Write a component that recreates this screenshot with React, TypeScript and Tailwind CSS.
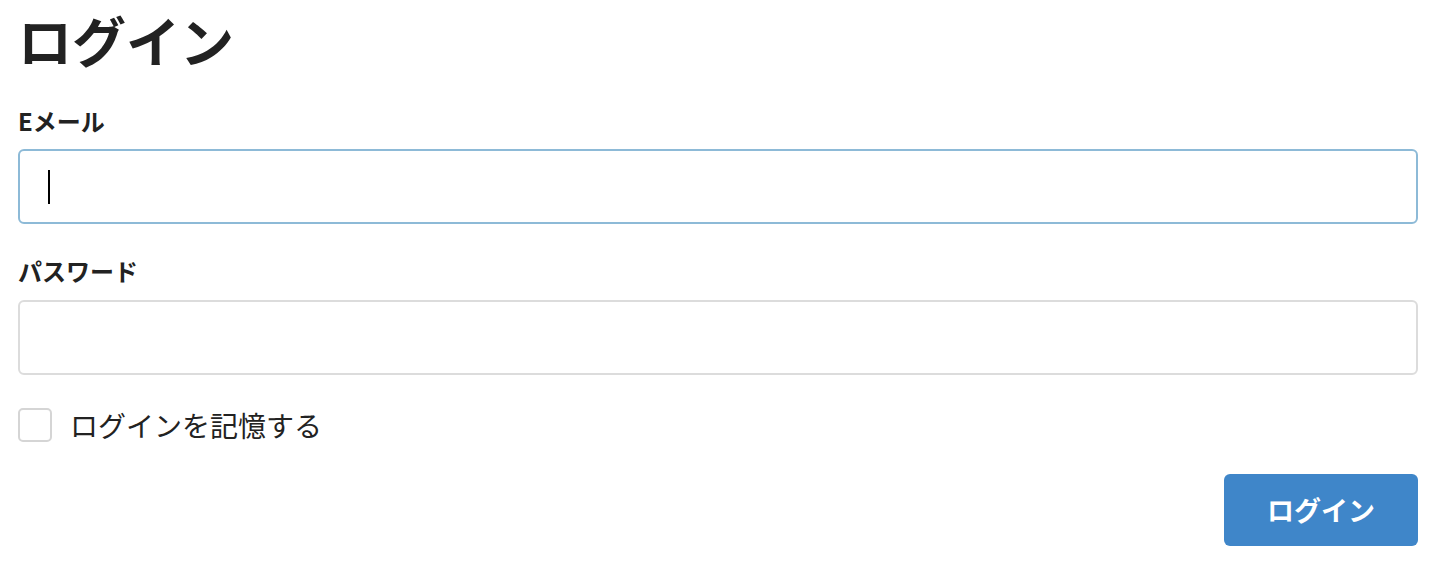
import React from "react";

const font = { fontFamily: '"Noto Sans CJK JP", "Noto Sans", sans-serif' };

export default function App() {
  return (
    <div className="min-h-[572px] bg-white text-[#222]" style={font}>
      <div className="ml-[18px] flex w-[1400px] flex-col">
        <h1 className="mt-[13px] text-[54px] leading-none font-bold">ログイン</h1>

        <label className="mt-[42px] text-[24px] leading-none font-bold">Eメール</label>
        <div className="mt-[16px] flex h-[75px] items-center rounded-[6px] border-2 border-[#8dbad7] px-[28px]">
          <span className="h-[34px] w-[2px] bg-black" />
        </div>

        <label className="mt-[35px] text-[24px] leading-none font-bold">パスワード</label>
        <input
          type="password"
          className="mt-[17px] h-[75px] rounded-[6px] border-2 border-[#dcdcdc] px-[28px] outline-none"
        />

        <div className="mt-[33px] flex items-center gap-[18px]">
          <span className="h-[34px] w-[34px] rounded-[5px] border-2 border-[#d5d5d5]" />
          <span className="text-[28px] leading-none">ログインを記憶する</span>
        </div>

        <div className="mt-[32px] flex justify-end">
          <button className="h-[72px] w-[194px] rounded-[6px] bg-[#3f86c9] text-[27px] font-bold text-white">
            ログイン
          </button>
        </div>
      </div>
    </div>
  );
}
